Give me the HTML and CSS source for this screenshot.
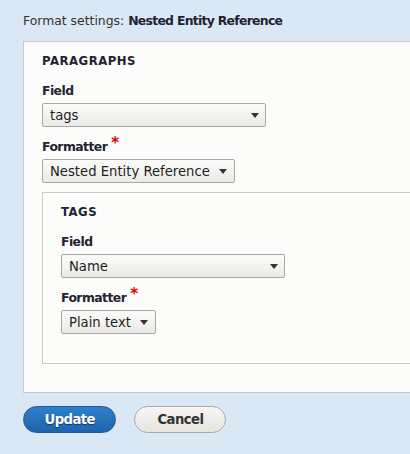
FILE: index.html
```html
<!DOCTYPE html>
<html lang="en">
<head>
<meta charset="utf-8">
<title>Format settings</title>
<link rel="stylesheet" href="styles.css">
</head>
<body>
<div class="page">
  <div class="title">Format settings: <strong>Nested Entity Reference</strong></div>

  <div class="box outer">
    <div class="legend">Paragraphs</div>

    <div class="item">
      <div class="label">Field</div>
      <div class="select fixed">
        <span class="value">tags</span>
        <svg class="caret" width="8" height="5" viewBox="0 0 8 5"><polygon points="0,0 8,0 4,5" fill="#333"/></svg>
      </div>
    </div>

    <div class="item">
      <div class="label">Formatter<span class="req">*</span></div>
      <div class="select">
        <span class="value">Nested Entity Reference</span>
        <svg class="caret" width="8" height="5" viewBox="0 0 8 5"><polygon points="0,0 8,0 4,5" fill="#333"/></svg>
      </div>
    </div>

    <div class="box inner">
      <div class="legend">Tags</div>

      <div class="item">
        <div class="label">Field</div>
        <div class="select fixed">
          <span class="value">Name</span>
          <svg class="caret" width="8" height="5" viewBox="0 0 8 5"><polygon points="0,0 8,0 4,5" fill="#333"/></svg>
        </div>
      </div>

      <div class="item">
        <div class="label">Formatter<span class="req">*</span></div>
        <div class="select">
          <span class="value">Plain text</span>
          <svg class="caret" width="8" height="5" viewBox="0 0 8 5"><polygon points="0,0 8,0 4,5" fill="#333"/></svg>
        </div>
      </div>
    </div>
  </div>

  <div class="actions">
    <button class="btn primary" type="button">Update</button>
    <button class="btn secondary" type="button">Cancel</button>
  </div>
</div>
</body>
</html>
```

FILE: styles.css
```css
html, body {
  margin: 0;
  padding: 0;
}

body {
  background: #d9e8f4;
  font-family: "DejaVu Sans", "Liberation Sans", sans-serif;
  color: #333;
  overflow: hidden;
}

.page {
  width: 410px;
  height: 454px;
  overflow: hidden;
  padding: 12px 0 0 23px;
  box-sizing: border-box;
}

.title {
  font-size: 12.4px;
  line-height: 18px;
  color: #333;
  white-space: nowrap;
}

.title strong {
  color: #222330;
  letter-spacing: -0.7px;
}

.box {
  background: #fcfcfa;
  border: 1px solid #c9c9c7;
  padding: 12px 0 28px 18px;
}

.outer {
  margin-top: 11px;
  width: 420px;
}

.inner {
  margin-top: 9px;
  padding-bottom: 29px;
}

.legend {
  font-size: 11.7px;
  line-height: 14px;
  font-weight: bold;
  text-transform: uppercase;
  letter-spacing: 0.5px;
  color: #222330;
  margin-bottom: 15px;
}

.item + .item {
  margin-top: 12px;
}

.label {
  font-size: 12.4px;
  line-height: 16px;
  font-weight: bold;
  letter-spacing: -0.55px;
  color: #222330;
  margin-bottom: 4px;
  white-space: nowrap;
}

.req {
  color: #e00000;
  font-size: 15px;
  font-weight: bold;
  line-height: 0;
  letter-spacing: 0;
  margin-left: 4px;
  vertical-align: 3px;
}

.select {
  display: inline-flex;
  align-items: center;
  gap: 9px;
  height: 24px;
  box-sizing: border-box;
  padding: 0 7px 0 7px;
  border: 1px solid #a8a8a8;
  border-radius: 2px;
  background: linear-gradient(#fbfbf9, #ebeae6);
  font-size: 13.2px;
  color: #1f1f1f;
  white-space: nowrap;
  vertical-align: top;
}

.select.fixed {
  width: 224px;
}

.select.fixed .caret {
  margin-left: auto;
  margin-right: -1px;
}

.caret {
  flex: none;
  display: block;
}

.actions {
  display: flex;
  gap: 18px;
  margin-top: 13px;
}

.btn {
  height: 27px;
  box-sizing: border-box;
  padding: 0 20.5px;
  border-radius: 20px;
  font-family: "DejaVu Sans", "Liberation Sans", sans-serif;
  font-size: 13.2px;
  font-weight: bold;
  letter-spacing: -0.55px;
  color: #333;
  border: 1px solid #a9a9a6;
  background: linear-gradient(#f7f6f2, #e6e4dd);
  cursor: pointer;
}

.btn.secondary {
  padding: 0 22px;
}

.btn.primary {
  color: #fff;
  border-color: #1e5a92;
  background: linear-gradient(#2f7fcb, #1e64ad);
  text-shadow: 0 1px 1px rgba(0, 0, 0, 0.5);
}
```
